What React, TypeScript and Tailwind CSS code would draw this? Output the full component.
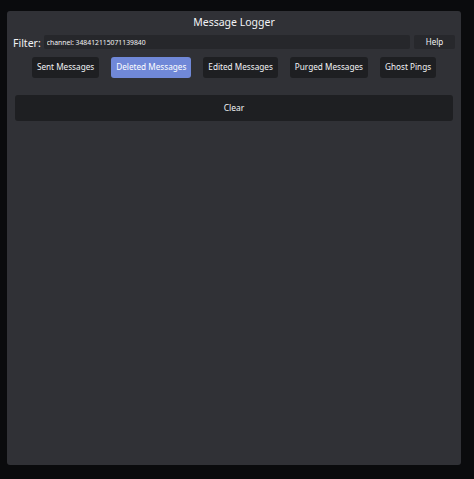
import React, { useState } from 'react';

const tabs = ['Sent Messages', 'Deleted Messages', 'Edited Messages', 'Purged Messages', 'Ghost Pings'];

export default function App() {
  const [activeTab, setActiveTab] = useState('Deleted Messages');
  const [filter, setFilter] = useState('channel: 348412115071139840');

  return (
    <div
      className="w-[474px] h-[479px] bg-[#0a0b0d] pt-[11px] pl-[7px] overflow-hidden"
      style={{ fontFamily: '"Noto Sans", "Open Sans", sans-serif' }}
    >
      <div className="w-[454px] h-[454px] bg-[#303136] rounded-[3px] flex flex-col text-[#f2f3f5]">
        <div className="text-center text-[10.5px] leading-none pt-[6px] h-[23px]">Message Logger</div>

        <div className="flex items-center pl-[6px] pr-[6px] h-[16px]">
          <span className="text-[10.5px] mr-[3px] mt-[3px]">Filter:</span>
          <input
            value={filter}
            onChange={(e) => setFilter(e.target.value)}
            className="flex-1 h-[14px] bg-[#26272b] rounded-[2px] px-[3px] text-[6.8px] text-[#f2f3f5] outline-none"
          />
          <button className="ml-[4px] w-[41px] h-[14px] bg-[#27282c] rounded-[2px] text-[8px] text-[#f2f3f5]">
            Help
          </button>
        </div>

        <div className="flex justify-center gap-[12px] mt-[7px]">
          {tabs.map((t) => (
            <button
              key={t}
              onClick={() => setActiveTab(t)}
              className={`${
                activeTab === t ? 'bg-[#7088d8] text-white' : 'bg-[#1e1f22] text-[#f2f3f5]'
              } h-[21px] px-[5px] rounded-[3px] text-[8.2px] whitespace-nowrap`}
            >
              {t}
            </button>
          ))}
        </div>

        <div className="px-[8px] mt-[15px]">
          <button className="w-full h-[26px] bg-[#1e1f22] rounded-[3px] text-[8.5px] text-[#f2f3f5]">Clear</button>
        </div>
      </div>
    </div>
  );
}
